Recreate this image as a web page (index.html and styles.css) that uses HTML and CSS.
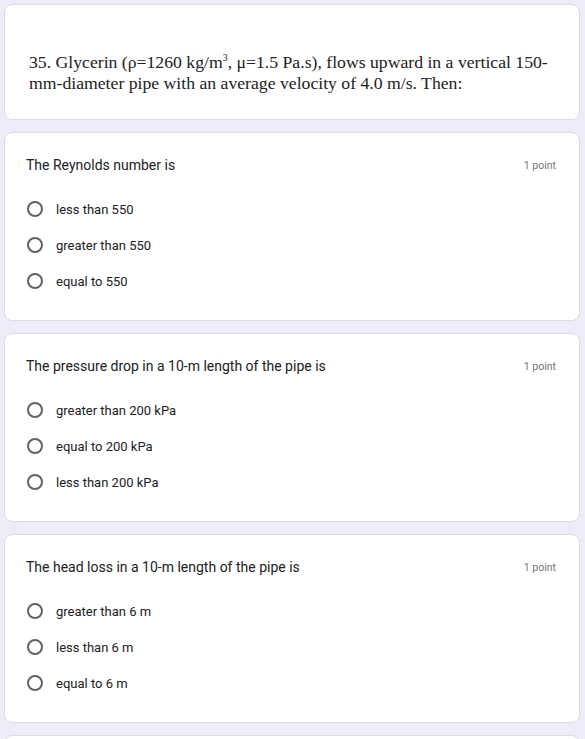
FILE: index.html
```html
<!DOCTYPE html>
<html>
<head>
<meta charset="utf-8">
<link rel="stylesheet" href="styles.css">
</head>
<body>
<main class="form">
  <section class="card header-card">
    <p class="intro">35. Glycerin (ρ=1260 kg/m<sup>3</sup>, μ=1.5 Pa.s), flows upward in a vertical 150-<br>mm-diameter pipe with an average velocity of 4.0 m/s. Then:</p>
  </section>

  <section class="card question">
    <div class="q-head">
      <span class="q-title">The Reynolds number is</span>
      <span class="q-points">1 point</span>
    </div>
    <ul class="options">
      <li class="option"><span class="radio"></span><span class="label">less than 550</span></li>
      <li class="option"><span class="radio"></span><span class="label">greater than 550</span></li>
      <li class="option"><span class="radio"></span><span class="label">equal to 550</span></li>
    </ul>
  </section>

  <section class="card question">
    <div class="q-head">
      <span class="q-title">The pressure drop in a 10-m length of the pipe is</span>
      <span class="q-points">1 point</span>
    </div>
    <ul class="options">
      <li class="option"><span class="radio"></span><span class="label">greater than 200 kPa</span></li>
      <li class="option"><span class="radio"></span><span class="label">equal to 200 kPa</span></li>
      <li class="option"><span class="radio"></span><span class="label">less than 200 kPa</span></li>
    </ul>
  </section>

  <section class="card question">
    <div class="q-head">
      <span class="q-title">The head loss in a 10-m length of the pipe is</span>
      <span class="q-points">1 point</span>
    </div>
    <ul class="options">
      <li class="option"><span class="radio"></span><span class="label">greater than 6 m</span></li>
      <li class="option"><span class="radio"></span><span class="label">less than 6 m</span></li>
      <li class="option"><span class="radio"></span><span class="label">equal to 6 m</span></li>
    </ul>
  </section>

  <section class="card question"></section>
</main>
</body>
</html>
```

FILE: styles.css
```css
html, body {
  margin: 0;
  padding: 0;
  background: #f0ebf8;
}

body {
  font-family: Roboto, "Liberation Sans", sans-serif;
  color: #202124;
  overflow: hidden;
}

.form {
  display: flex;
  flex-direction: column;
  gap: 12px;
  padding: 4px 5px 0 4px;
}

.card {
  background: #ffffff;
  border: 1px solid #dadce0;
  border-radius: 8px;
  box-sizing: border-box;
}

.header-card {
  height: 116px;
  display: flex;
  align-items: center;
  padding: 22px 24px 0 24px;
}

.intro {
  margin: 0;
  font-family: "Liberation Serif", "Times New Roman", serif;
  font-size: 17.7px;
  line-height: 21px;
  color: #222;
}

.intro sup {
  font-size: 10px;
  line-height: 0;
  vertical-align: 7px;
}

.question {
  height: 189px;
  padding: 22px 23px 0 21px;
  flex-shrink: 0;
}

.q-head {
  display: flex;
  justify-content: space-between;
  align-items: center;
  height: 20px;
}

.q-title {
  font-size: 14px;
  font-weight: 400;
  color: #202124;
}

.q-points {
  font-size: 10.5px;
  color: #70757a;
}

.options {
  list-style: none;
  margin: 24px 0 0 0;
  padding: 0;
  display: flex;
  flex-direction: column;
  gap: 16px;
}

.option {
  display: flex;
  align-items: center;
  gap: 13px;
  height: 20px;
  padding-left: 1px;
}

.radio {
  width: 16px;
  height: 16px;
  border: 2px solid #5f6368;
  border-radius: 50%;
  box-sizing: border-box;
  flex-shrink: 0;
}

.label {
  font-size: 13px;
  color: #202124;
}
```
